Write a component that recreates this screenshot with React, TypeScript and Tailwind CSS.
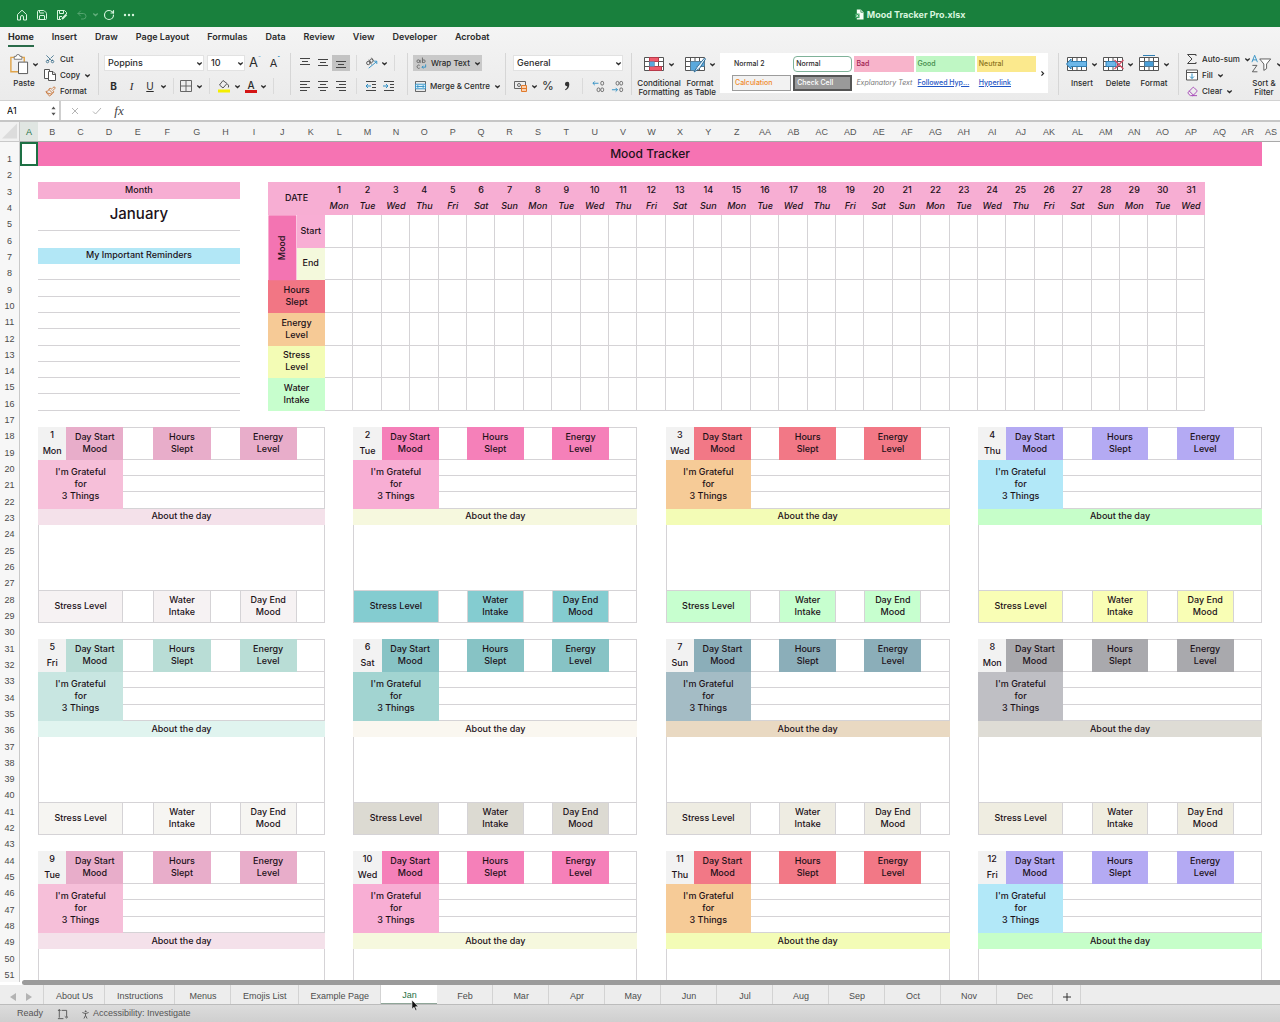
import type { CSSProperties, ReactNode } from "react"
import clsx from "clsx"
import { Save, RotateCw, Undo2, Scissors, Paintbrush, Eraser, PersonStanding } from "lucide-react"

type Cell = {
  row: number
  col: number
  rows?: number
  cols?: number
  text?: string
  className?: string
}

type Palette = { head: string; grateful: string; about: string; foot: string }

const WEEKDAYS = ["Mon", "Tue", "Wed", "Thu", "Fri", "Sat", "Sun"]
const TRACKER_DAYS = Array.from({ length: 31 }, (_, i) => i + 1)
const ROW_COUNT = 51
const COL_COUNT = 45

const RIBBON_TABS = ["Home", "Insert", "Draw", "Page Layout", "Formulas", "Data", "Review", "View", "Developer", "Acrobat"]
const SHEETS = [
  "About Us", "Instructions", "Menus", "Emojis List", "Example Page",
  "Jan", "Feb", "Mar", "Apr", "May", "Jun", "Jul", "Aug", "Sep", "Oct", "Nov", "Dec",
]

const PALETTES: Palette[] = [
  { head: "bg-[#e8adca]", grateful: "bg-[#f6bfd9]", about: "bg-[#f4e1ea]", foot: "bg-[#f6f2f3]" },
  { head: "bg-[#f580b9]", grateful: "bg-[#f8aed4]", about: "bg-[#f6f8de]", foot: "bg-[#84ccd0]" },
  { head: "bg-[#f27886]", grateful: "bg-[#f6cb97]", about: "bg-[#f3fcb6]", foot: "bg-[#c7ffcf]" },
  { head: "bg-[#b4aaf3]", grateful: "bg-[#b2e8f8]", about: "bg-[#c6fec9]", foot: "bg-[#f9feb5]" },
  { head: "bg-[#b9ddd6]", grateful: "bg-[#c8e6e1]", about: "bg-[#e0f4ef]", foot: "bg-[#f6f5f2]" },
  { head: "bg-[#87c3c5]", grateful: "bg-[#a2d4d1]", about: "bg-[#faf7f0]", foot: "bg-[#dcdad2]" },
  { head: "bg-[#8baeb9]", grateful: "bg-[#a4bcc5]", about: "bg-[#e9d9c2]", foot: "bg-[#eeece2]" },
  { head: "bg-[#a9a9ad]", grateful: "bg-[#bfbfc4]", about: "bg-[#dedcd5]", foot: "bg-[#efede1]" },
]

const LINE = "border-[#d5d3d6]"

const columnName = (n: number) => {
  const first = n > 26 ? "A" : ""
  return first + String.fromCharCode(65 + ((n - 1) % 26))
}

const weekday = (day: number) => WEEKDAYS[(day - 1) % 7]

const trackerCells = (): Cell[] => {
  const cells: Cell[] = [
    { row: 1, col: 2, cols: 43, text: "Mood Tracker", className: "bg-[#f673b3] text-[12px]" },
    { row: 3, col: 2, cols: 7, text: "Month", className: "bg-[#f7aed3]" },
    { row: 4, col: 2, cols: 7, rows: 2, text: "January", className: clsx("text-[15px] border-b", LINE) },
    { row: 7, col: 2, cols: 7, text: "My Important Reminders", className: "bg-[#b2e7f6]" },
    { row: 3, col: 10, cols: 2, rows: 2, text: "DATE", className: "bg-[#f7aed3]" },
    { row: 5, col: 10, rows: 4, text: "Mood", className: "bg-[#f374b2] [writing-mode:vertical-rl] rotate-180" },
    { row: 5, col: 11, rows: 2, text: "Start", className: "bg-[#f8aed4]" },
    { row: 7, col: 11, rows: 2, text: "End", className: "bg-[#f4f9dc]" },
    { row: 9, col: 10, cols: 2, rows: 2, text: "Hours\nSlept", className: "bg-[#f27684]" },
    { row: 11, col: 10, cols: 2, rows: 2, text: "Energy\nLevel", className: "bg-[#f6ca96]" },
    { row: 13, col: 10, cols: 2, rows: 2, text: "Stress\nLevel", className: "bg-[#f3fcb5]" },
    { row: 15, col: 10, cols: 2, rows: 2, text: "Water\nIntake", className: "bg-[#c7fecd]" },
  ]
  for (let row = 8; row <= 16; row++) {
    cells.push({ row, col: 2, cols: 7, className: clsx("border-b", LINE) })
  }
  for (const day of TRACKER_DAYS) {
    const col = 11 + day
    cells.push({ row: 3, col, text: String(day), className: "bg-[#f7aed3]" })
    cells.push({ row: 4, col, text: weekday(day), className: "bg-[#f7aed3] italic" })
    for (let row = 5; row <= 15; row += 2) {
      cells.push({ row, col, rows: 2, className: clsx("border-r border-b", LINE) })
    }
  }
  return cells
}

const dayCells = (day: number): Cell[] => {
  const index = day - 1
  const top = 18 + Math.floor(index / 4) * 13
  const left = 2 + (index % 4) * 11
  const { head, grateful, about, foot } = PALETTES[index % 8]

  const cells: Cell[] = [
    { row: 0, col: 0, text: String(day), className: "bg-[#f2f2f2]" },
    { row: 1, col: 0, text: weekday(day), className: "bg-[#f2f2f2]" },
    { row: 0, col: 1, cols: 2, rows: 2, text: "Day Start\nMood", className: head },
    { row: 0, col: 3, rows: 2, className: clsx("border-y", LINE) },
    { row: 0, col: 4, cols: 2, rows: 2, text: "Hours\nSlept", className: head },
    { row: 0, col: 6, rows: 2, className: clsx("border-y", LINE) },
    { row: 0, col: 7, cols: 2, rows: 2, text: "Energy\nLevel", className: head },
    { row: 0, col: 9, rows: 2, className: clsx("border-y border-r", LINE) },
    { row: 2, col: 0, cols: 3, rows: 3, text: "I'm Grateful\nfor\n3 Things", className: grateful },
    { row: 2, col: 3, cols: 7, className: clsx("border-b border-r", LINE) },
    { row: 3, col: 3, cols: 7, className: clsx("border-b border-r", LINE) },
    { row: 4, col: 3, cols: 7, className: clsx("border-b border-r", LINE) },
    { row: 5, col: 0, cols: 10, text: "About the day", className: about },
    { row: 6, col: 0, cols: 10, rows: 4, className: clsx("border-x", LINE) },
    { row: 10, col: 0, cols: 3, rows: 2, text: "Stress Level", className: clsx("border", LINE, foot) },
    { row: 10, col: 3, rows: 2, className: clsx("border-y", LINE) },
    { row: 10, col: 4, cols: 2, rows: 2, text: "Water\nIntake", className: clsx("border", LINE, foot) },
    { row: 10, col: 6, rows: 2, className: clsx("border-y", LINE) },
    { row: 10, col: 7, cols: 2, rows: 2, text: "Day End\nMood", className: clsx("border", LINE, foot) },
    { row: 10, col: 9, rows: 2, className: clsx("border-y border-r", LINE) },
  ]
  return cells
    .map((cell) => ({ ...cell, row: cell.row + top, col: cell.col + left }))
    .filter((cell) => cell.row <= ROW_COUNT)
    .map((cell) => ({ ...cell, rows: Math.min(cell.rows ?? 1, ROW_COUNT + 1 - cell.row) }))
}

const CELLS: Cell[] = [...trackerCells(), ...Array.from({ length: 12 }, (_, i) => dayCells(i + 1)).flat()]

// header column and header row take the first grid track each
const place = (row: number, col: number, rows = 1, cols = 1): CSSProperties => ({
  gridArea: `${row + 1} / ${col + 1} / span ${rows} / span ${cols}`,
})

const Chevron = ({ className }: { className?: string }) => (
  <svg viewBox="0 0 8 8" className={clsx("size-[7px] shrink-0", className)} fill="none" stroke="currentColor" strokeWidth="1.4">
    <path d="M1.5 2.8 4 5.2 6.5 2.8" />
  </svg>
)

const GroupLine = () => <div className="mx-[5px] mt-0.5 h-[42px] w-px shrink-0 bg-[#d6d6d6]" />
const Divider = () => <div className="mx-[6px] h-4 w-px shrink-0 bg-[#dadada]" />

const Tool = ({ label, className, children }: { label: string; className?: string; children: ReactNode }) => (
  <button aria-label={label} className={clsx("flex h-4 shrink-0 items-center justify-center", className)}>
    {children}
  </button>
)

const BigTool = ({ label, icon, className }: { label: string; icon: ReactNode; className?: string }) => (
  <button className={clsx("flex shrink-0 flex-col items-center gap-[6px] pt-1", className)}>
    <span className="flex h-[18px] items-center gap-[3px]">
      {icon}
      <Chevron />
    </span>
    <span className="text-center leading-[9px] whitespace-pre">{label}</span>
  </button>
)

const SmallTool = ({ label, icon, menu }: { label: string; icon: ReactNode; menu?: boolean }) => (
  <button className="flex h-4 items-center gap-1">
    <span className="flex w-3 justify-center">{icon}</span>
    {label}
    {menu && <Chevron />}
  </button>
)

const Picker = ({ label, value, className }: { label: string; value: string; className?: string }) => (
  <div className={clsx("relative h-4 shrink-0", className)}>
    <select aria-label={label} className="h-4 w-full appearance-none border border-[#e2e2e2] bg-white px-[3px] text-[9px] leading-[14px]">
      <option>{value}</option>
    </select>
    <Chevron className="pointer-events-none absolute top-[5px] right-px" />
  </div>
)

const Lines = ({ d }: { d: string }) => (
  <svg viewBox="0 0 12 12" className="size-3" stroke="#444" strokeWidth="1" fill="none">
    <path d={d} />
  </svg>
)

const IndentIcon = ({ flip }: { flip?: boolean }) => (
  <svg viewBox="0 0 12 12" className="size-3" strokeWidth="1" fill="none">
    <path d="M1 1.5h10M7 4.5h4M7 7.5h4M1 10.5h10" stroke="#444" />
    <path d={flip ? "M0 6h5M3 4l2 2-2 2" : "M6 6H1M3 4 1 6l2 2"} stroke="#2f8fc4" />
  </svg>
)

const DecimalIcon = ({ grow }: { grow?: boolean }) => (
  <svg viewBox="0 0 14 14" className="size-[13px]" fill="none" stroke="#666" strokeWidth="1">
    <rect x="9.5" y="1.5" width="3" height="4" rx="1.5" />
    <rect x={grow ? 5.5 : 9.5} y={grow ? 1.5 : 8.5} width="3" height="4" rx="1.5" />
    <rect x={grow ? 9.5 : 5.5} y="8.5" width="3" height="4" rx="1.5" />
    <path d={grow ? "M1 10.5h6M5 8.5l2 2-2 2" : "M7 3.5H1M3 1.5l-2 2 2 2"} stroke="#2f8fc4" />
  </svg>
)

const GridIcon = ({ children }: { children?: ReactNode }) => (
  <svg viewBox="0 0 22 18" className="h-[18px] w-[22px]" fill="none" strokeWidth="1">
    <path d="M1.5 2.5h19v13h-19zM1.5 6.5h19M1.5 11.5h19M6.5 2.5v13M11 2.5v13M15.5 2.5v13" stroke="#555" fill="#fff" />
    {children}
  </svg>
)

const TitleBar = () => (
  <header className="flex h-[27px] shrink-0 items-center bg-[#19803d] text-[#d8f5df]">
    <nav className="flex flex-[8] items-center gap-2 pt-0.5 pl-4">
      <Tool label="Home" className="w-3">
        <svg viewBox="0 0 12 12" className="size-3" fill="none" stroke="currentColor">
          <path d="M1.5 5.5 6 1.2l4.500 4.300v5.500H7.500V8a1.500 1.500 0 0 0-3 0v3h-3z" />
        </svg>
      </Tool>
      <Tool label="Save" className="w-3"><Save size={12} strokeWidth={2} /></Tool>
      <Tool label="Save as" className="w-3">
        <svg viewBox="0 0 12 12" className="size-3" fill="none" stroke="currentColor">
          <path d="M5 10.500H1.500v-9h7l2 2V5M3.500 1.500v3h4v-3M3.500 10.500v-3H6" />
          <path d="m6 10 4.500-4.500" strokeWidth="2" />
        </svg>
      </Tool>
      <Tool label="Undo" className="w-3 opacity-30"><Undo2 size={12} /></Tool>
      <Chevron className="-mx-1 opacity-40" />
      <Tool label="Redo" className="w-3"><RotateCw size={12} strokeWidth={2.300} /></Tool>
      <Tool label="More" className="w-3">
        <svg viewBox="0 0 12 4" className="h-1 w-3" fill="currentColor">
          <circle cx="2" cy="2" r="1.200" /><circle cx="6" cy="2" r="1.200" /><circle cx="10" cy="2" r="1.200" />
        </svg>
      </Tool>
    </nav>
    <h1 className="flex shrink-0 items-center gap-[3px] pt-0.5 text-[9px] font-bold">
      <svg viewBox="0 0 10 12" className="h-[11px] w-[9px]">
        <path d="M2 .5h4.500L9.500 3.500v8H2z" fill="#f4fff6" />
        <path d="M6.500.5v3h3" fill="none" stroke="#19803d" strokeWidth=".8" />
        <path d="M0 5h5v5H0z" fill="#2c9c56" />
        <path d="m1.300 6 2.400 3M3.700 6 1.300 9" stroke="#fff" strokeWidth=".8" />
      </svg>
      Mood Tracker Pro.xlsx
    </h1>
    <div className="flex-[3]" />
  </header>
)

const StyleGallery = () => (
  <div className="ml-px flex w-[328px] shrink-0 items-center bg-white pl-3 text-[7px] leading-[14px]">
    <div className="grid flex-1 grid-cols-5 gap-x-0.5 gap-y-[3px] whitespace-nowrap [&>button]:h-4 [&>button]:min-w-0 [&>button]:px-0.5 [&>button]:text-left">
      <button>Normal 2</button>
      <button className="rounded-sm border border-[#7fb299]">Normal</button>
      <button className="bg-[#f8b4cb] text-[#a0204e]">Bad</button>
      <button className="bg-[#bff7c4] text-[#3f8a4a]">Good</button>
      <button className="bg-[#fbe98d] text-[#8c7420]">Neutral</button>
      <button className="border border-[#9c9c9c] bg-[#f2f2f2] font-medium text-[#f08a2c]">Calculation</button>
      <button className="border-2 border-double border-[#555] bg-[#9a9a9a] leading-3 font-medium text-white">Check Cell</button>
      <button className="font-normal text-[#777] italic">Explanatory Text</button>
      <button className="text-[#1f55c4] underline">Followed Hyp...</button>
      <button className="text-[#1f55c4] underline">Hyperlink</button>
    </div>
    <button aria-label="More styles" className="flex w-3 justify-center"><Chevron className="-rotate-90" /></button>
  </div>
)

const Ribbon = () => (
  <section className="shrink-0 overflow-hidden border-b border-[#d2d2d2] bg-linear-to-b from-[#f4f4f4] to-[#ebebeb] text-[#2b2b2b]">
    <nav className="flex h-[23px] items-start gap-[18px] pt-0.5 pl-2 text-[9px] leading-4 font-semibold">
      {RIBBON_TABS.map((tab) => (
        <button key={tab} className={clsx("h-[18px] border-b-2", tab === "Home" ? "border-[#2a6b4a] font-bold" : "border-transparent")}>
          {tab}
        </button>
      ))}
    </nav>
    <div className="flex h-[50px] pt-px pl-2 text-[8px] font-medium">
      <div className="flex w-[85px] shrink-0 gap-1">
        <BigTool
          label="Paste"
          className="w-8"
          icon={
            <svg viewBox="0 0 20 22" className="h-[21px] w-5" fill="none">
              <path d="M6 3.500H1.500v15H9" stroke="#e0a44a" strokeWidth="1.500" />
              <path d="M12 3.500h3.500V8" stroke="#e0a44a" strokeWidth="1.500" />
              <path d="M5 5.500v-3h2a2 2 0 0 1 4 0h2v3z" fill="#fff" stroke="#777" />
              <path d="M9.500 8.500h9.500v12H9.500z" fill="#fff" stroke="#555" />
            </svg>
          }
        />
        <div className="w-[49px]">
          <SmallTool label="Cut" icon={<Scissors size={10} className="-rotate-90 text-[#3c6f8a]" />} />
          <SmallTool
            label="Copy"
            menu
            icon={
              <svg viewBox="0 0 12 12" className="size-3" fill="#fff" stroke="#555">
                <path d="M.5.5h5v9h-5z" />
                <path d="M4.500 2.500H9l2.500 2.500v6.500h-7zM8.500 2.500v3h3" />
              </svg>
            }
          />
          <SmallTool label="Format" icon={<Paintbrush size={11} className="text-[#c8763a]" />} />
        </div>
      </div>
      <GroupLine />
      <div className="flex w-[181px] shrink-0 flex-col gap-[7px] pt-1">
        <div className="flex">
          <Picker label="Font" value="Poppins" className="mr-[3px] w-[100px]" />
          <Picker label="Font size" value="10" className="w-[38px]" />
          <Tool label="Increase font size" className="w-5 text-[13px] font-normal">A<span className="-mt-2 text-[7px] text-[#2f8fc4]">ˆ</span></Tool>
          <Tool label="Decrease font size" className="w-5 text-[11px] font-normal">A<span className="-mt-2 text-[7px] text-[#2f8fc4]">ˇ</span></Tool>
        </div>
        <div className="flex items-center text-[10px]">
          <Tool label="Bold" className="w-[19px] font-bold">B</Tool>
          <Tool label="Italic" className="w-[17px] font-['Liberation_Serif',serif] text-[11px] italic">I</Tool>
          <Tool label="Underline" className="w-5 font-normal underline">U</Tool>
          <Chevron />
          <Divider />
          <Tool label="Borders" className="w-3">
            <svg viewBox="0 0 12 12" className="size-3" fill="none" stroke="#666">
              <path d="M.5.5h11v11H.5zM6 .5v11M.5 6h11" />
            </svg>
          </Tool>
          <Chevron className="ml-1" />
          <Divider />
          <Tool label="Fill colour" className="w-4">
            <svg viewBox="0 0 14 14" className="size-[14px]" fill="none" stroke="#555">
              <path d="M6 1.500 2.500 6 6 9l4-4.500zM10.500 5q2 2 .8 3.500" />
              <path d="M1 12h12" stroke="#f4ee00" strokeWidth="3" />
            </svg>
          </Tool>
          <Chevron className="mr-px ml-0.5" />
          <Tool label="Font colour" className="w-[18px]">
            <span className="border-b-[3px] border-[#d41414] px-0.5 leading-[10px]">A</span>
          </Tool>
          <Chevron />
          <Divider />
        </div>
      </div>
      <GroupLine />
      <div className="flex w-[106px] shrink-0 flex-col gap-[7px] pt-1">
        <div className="flex items-center">
          <Tool label="Top align" className="w-[18px]"><Lines d="M1 1.500h10M3 4.500h6M1 7.500h10" /></Tool>
          <Tool label="Middle align" className="w-[18px]"><Lines d="M1 2.500h10M3 5.500h6M1 8.500h10" /></Tool>
          <Tool label="Bottom align" className="w-[18px] bg-[#c3c3c3]"><Lines d="M1 4.500h10M3 7.500h6M1 10.500h10" /></Tool>
          <Divider />
          <Tool label="Orientation" className="w-4">
            <svg viewBox="0 0 14 14" className="size-[13px]" fill="none" stroke="#555">
              <circle cx="3.500" cy="6.500" r="1.800" />
              <circle cx="7" cy="4" r="1.800" />
              <path d="m4 3 3 5M7 .8 9 4" />
              <path d="m4 12 8.500-7M9.500 4.500h3.200v3" stroke="#2f8fc4" />
            </svg>
          </Tool>
          <Chevron className="ml-0.5" />
          <Divider />
        </div>
        <div className="flex items-center">
          <Tool label="Align left" className="w-[18px]"><Lines d="M1 1.500h10M1 4.500h7M1 7.500h10M1 10.500h7" /></Tool>
          <Tool label="Centre" className="w-[18px]"><Lines d="M1 1.500h10M3 4.500h6M1 7.500h10M3 10.500h6" /></Tool>
          <Tool label="Align right" className="w-[18px]"><Lines d="M1 1.500h10M4 4.500h7M1 7.500h10M4 10.500h7" /></Tool>
          <Divider />
          <Tool label="Decrease indent" className="w-4"><IndentIcon /></Tool>
          <Tool label="Increase indent" className="w-5"><IndentIcon flip /></Tool>
        </div>
      </div>
      <GroupLine />
      <div className="flex w-[87px] shrink-0 flex-col items-start gap-[7px] pt-1">
        <button className="flex h-4 items-center gap-1 bg-[#c9c9c9] pr-px pl-[3px]">
          <svg viewBox="0 0 12 14" className="h-[13px] w-[11px]" fill="none" stroke="#666">
            <circle cx="2.500" cy="4.500" r="1.500" />
            <path d="M4.500 3v3.500M7 .5v6" />
            <circle cx="8.500" cy="4.500" r="1.500" />
            <path d="M4 9a1.800 1.800 0 1 0 0 3" />
            <path d="M10.500 8v3H6.500M8 9.500 6.500 11 8 12.500" stroke="#2f8fc4" />
          </svg>
          Wrap Text
          <Chevron />
        </button>
        <button className="flex h-4 items-center gap-1 pl-0.5 whitespace-nowrap">
          <svg viewBox="0 0 12 12" className="size-[11px]" fill="none" stroke="#2f8fc4">
            <path d="M.5.5h11v11H.5z" stroke="#555" />
            <path d="M.5 3.500h11v5H.5z" fill="#dff1fb" />
            <path d="M2 6h8M3.500 4.500 2 6l1.500 1.500M8.500 4.500 10 6 8.500 7.500" />
          </svg>
          Merge &amp; Centre
          <Chevron />
        </button>
      </div>
      <GroupLine />
      <div className="flex w-[115px] shrink-0 flex-col gap-[7px] pt-1">
        <Picker label="Number format" value="General" className="ml-0.5 w-[110px]" />
        <div className="flex items-center">
          <Tool label="Currency" className="w-5">
            <svg viewBox="0 0 14 12" className="h-3 w-[14px]" fill="none" stroke="#666">
              <path d="M.5 1.500h11v7H.5z" />
              <circle cx="5" cy="5" r="1.500" />
              <path d="M7.500 5.500h5v6h-5zM7.500 8.500h5" fill="#fbd0ae" stroke="#e07a2c" />
            </svg>
          </Tool>
          <Chevron />
          <Tool label="Percent" className="w-5 text-[12px] font-normal">%</Tool>
          <Tool label="Comma style" className="w-[18px]">
            <svg viewBox="0 0 8 10" className="h-[10px] w-2" fill="#333">
              <path d="M4 .8a2.200 2.200 0 0 1 2.300 2.400C6.300 6 5 8.200 2.500 9.300L2 8.500C3.500 7.600 4.200 6.500 4.300 5.200A2.200 2.200 0 0 1 4 .8z" />
            </svg>
          </Tool>
          <Divider />
          <Tool label="Increase decimal" className="w-[18px]"><DecimalIcon /></Tool>
          <Tool label="Decrease decimal" className="w-5"><DecimalIcon grow /></Tool>
        </div>
      </div>
      <GroupLine />
      <div className="flex w-[416px] shrink-0">
        <BigTool
          label={"Conditional\nFormatting"}
          className="w-11"
          icon={
            <GridIcon>
              <path d="M6.500 2.500h9v4h-9zM6.500 11.500h12v4h-12z" fill="#ef5b6c" stroke="#b83a4a" />
              <path d="M6.500 6.500h5v5h-5z" fill="#5aa9dd" />
            </GridIcon>
          }
        />
        <BigTool
          label={"Format\nas Table"}
          className="w-[38px]"
          icon={
            <GridIcon>
              <path d="M6.500 6.500h14v5h-14zM6.500 11.500h6v4h-6z" fill="#5aa9dd" />
              <path d="m20.500 3-7 8.500-3.500 5.500 5.500-3.500L21.500 4z" fill="#eaf5fc" stroke="#2f6f9c" />
            </GridIcon>
          }
        />
        <div className="flex h-[42px] pt-0.5"><StyleGallery /></div>
      </div>
      <GroupLine />
      <div className="flex w-[109px] shrink-0">
        <BigTool
          label="Insert"
          className="w-9"
          icon={<GridIcon><path d="M5 6.500h15.500v5H5V14L.5 9 5 4z" fill="#6db7e8" stroke="#2f7fb4" /></GridIcon>}
        />
        <BigTool
          label="Delete"
          className="w-9"
          icon={
            <GridIcon>
              <path d="M4 6.500h10v5H4z" fill="#6db7e8" stroke="#2f7fb4" />
              <path d="m12.500 5 9 9M21.500 5l-9 9" stroke="#d8506a" strokeWidth="1.300" />
            </GridIcon>
          }
        />
        <BigTool
          label="Format"
          className="w-9"
          icon={
            <GridIcon>
              <path d="M6.500 6.500h9v5h-9z" fill="#4a9fd8" />
              <path d="M5 .5h12" stroke="#2f7fb4" />
            </GridIcon>
          }
        />
      </div>
      <GroupLine />
      <div className="flex shrink-0 whitespace-nowrap">
        <div className="w-[66px] pl-0.5">
          <SmallTool label="Auto-sum" menu icon={<Lines d="M10 3V1.500H1.500L6 6l-4.500 4.500H10V9" />} />
          <SmallTool
            label="Fill"
            menu
            icon={
              <svg viewBox="0 0 12 12" className="size-3" fill="#fff" stroke="#555">
                <path d="M.5 1h11v10H.5zM.5 3.500h11" />
                <path d="M6 4.500v5M4 7.500l2 2 2-2" stroke="#2f8fc4" fill="none" />
              </svg>
            }
          />
          <SmallTool label="Clear" menu icon={<Eraser size={11} className="text-[#a23fb5]" />} />
        </div>
        <BigTool
          label={"Sort &\nFilter"}
          className="w-7"
          icon={
            <svg viewBox="0 0 24 20" className="ml-[6px] h-5 w-[22px] shrink-0" fill="none">
              <path d="m1 8 3-7.500L7 8M2 5.500h4" stroke="#2f8fc4" />
              <path d="M1.500 11.500H6.500L1.500 18.500H7" stroke="#555" />
              <path d="M9.500 4.500h12l-4.500 5.500v5l-3 2v-7z" fill="#fff" stroke="#555" />
            </svg>
          }
        />
      </div>
    </div>
  </section>
)

const FormulaBar = () => (
  <section className="flex h-[21px] shrink-0 items-center border-b-2 border-[#c6c6c6] bg-white">
    <div className="flex h-full w-[61px] items-center justify-between border-r-2 border-[#cfcfcf] pr-[3px] pl-[7px]">
      <input aria-label="Name box" defaultValue="A1" className="w-8 text-[9px] outline-none" />
      <svg viewBox="0 0 6 12" className="h-3 w-[5px]" fill="#555">
        <path d="M3 .5 5.500 4h-5zM3 11.500.5 8h5z" />
      </svg>
    </div>
    <Tool label="Cancel" className="w-7">
      <svg viewBox="0 0 8 8" className="size-2" stroke="#b5b5b5"><path d="m1 1 6 6M7 1 1 7" /></svg>
    </Tool>
    <Tool label="Enter" className="w-4">
      <svg viewBox="0 0 10 8" className="h-2 w-[10px]" stroke="#b5b5b5" fill="none"><path d="m1 4.500 2.500 2.500L9 1" /></svg>
    </Tool>
    <label htmlFor="formula" className="w-7 text-center font-['Liberation_Serif',serif] text-[13px] leading-4 text-[#444] italic">fx</label>
    <input id="formula" className="h-full min-w-0 flex-1 text-[9px] outline-none" />
  </section>
)

const Sheet = () => (
  <main className="relative min-h-0 flex-1 overflow-hidden bg-white pb-[3px]">
    <table className="grid h-full w-full grid-cols-[20px_18px_repeat(3,minmax(0,57fr))_repeat(3,minmax(0,59fr))_repeat(37,minmax(0,57fr))_18px] grid-rows-[20px_24px_repeat(50,minmax(0,1fr))] text-[9px] leading-3 font-medium text-[#1c1118]">
      <thead className="contents">
        <tr className="contents font-['Liberation_Sans',sans-serif] text-[9px] text-[#555]">
          <th aria-label="Select all" style={place(0, 0)} className="flex items-end justify-end border-r border-b border-[#c9c9c9] bg-[#f1f1f1] p-0.5">
            <svg viewBox="0 0 16 16" className="size-4" fill="#dcdcdc"><path d="M16 0v16H0z" /></svg>
          </th>
          {Array.from({ length: COL_COUNT }, (_, i) => i + 1).map((n) => (
            <th
              key={n}
              scope="col"
              style={place(0, n)}
              className={clsx(
                "flex items-center justify-center border-b border-[#a9a9a9] font-normal",
                n === 1 ? "bg-[#e0e6e2] text-[#1d7044]" : "bg-[#f4f4f4]"
              )}
            >
              {columnName(n)}
            </th>
          ))}
        </tr>
      </thead>
      <tbody className="contents">
        {Array.from({ length: ROW_COUNT }, (_, i) => i + 1).map((row) => (
          <tr key={row} className="contents">
            <th
              scope="row"
              style={place(row, 0)}
              className="flex items-end justify-center border-r border-[#c9c9c9] bg-[#f7f7f7] pb-px font-['Liberation_Sans',sans-serif] text-[9px] font-normal text-[#4a4a4a]"
            >
              {row}
            </th>
            {row === 1 && <td style={place(1, 1)} className="border-2 border-[#1d7044]" />}
            {CELLS.filter((cell) => cell.row === row).map((cell) => (
              <td
                key={cell.col}
                rowSpan={cell.rows}
                colSpan={cell.cols}
                style={place(cell.row, cell.col, cell.rows, cell.cols)}
                className={clsx("flex items-center justify-center pb-px text-center whitespace-pre", cell.className)}
              >
                {cell.text}
              </td>
            ))}
          </tr>
        ))}
      </tbody>
    </table>
    <div className="absolute right-0 bottom-0 left-[22px] h-[5px] rounded-l-full bg-[#9b9b9b]" />
  </main>
)

const SheetTabs = () => (
  <nav className="flex h-5 shrink-0 items-stretch border-b border-[#bcbcbc] bg-[#ededed] font-['Liberation_Sans',sans-serif] text-[9px] text-[#4d4d4d]">
    <div className="flex w-11 items-center gap-[10px] border-r border-[#d3d3d3] pt-1 pl-[10px]">
      <button aria-label="Previous sheet">
        <svg viewBox="0 0 6 8" className="h-2 w-[6px]" fill="#b3b3b3"><path d="M6 0v8L0 4z" /></svg>
      </button>
      <button aria-label="Next sheet">
        <svg viewBox="0 0 6 8" className="h-2 w-[6px]" fill="#b3b3b3"><path d="M0 0v8l6-4z" /></svg>
      </button>
    </div>
    {SHEETS.map((name) => (
      <button
        key={name}
        className={clsx(
          "min-w-14 shrink-0 pt-1 pr-[11px] pl-3",
          name === "Jan" ? "border-b border-[#8fa598] bg-white text-[#1d7044]" : "border-r border-[#d3d3d3]"
        )}
      >
        {name}
      </button>
    ))}
    <button aria-label="Add sheet" className="flex w-7 items-center justify-center border-r border-[#d3d3d3] pt-1">
      <svg viewBox="0 0 8 8" className="size-2" stroke="#333"><path d="M4 0v8M0 4h8" /></svg>
    </button>
  </nav>
)

const StatusBar = () => (
  <footer className="flex h-[17px] shrink-0 items-center bg-linear-to-b from-[#dcdcdc] to-[#cfcfcf] pt-px pl-[17px] font-['Liberation_Sans',sans-serif] text-[9px] text-[#555]">
    <span>Ready</span>
    <svg viewBox="0 0 12 12" className="mr-3 ml-[14px] size-[11px]" fill="none" stroke="#555">
      <path d="M1 1.500h3M2.500 0v9.500M1 10.500h6M5 1.500h5.500V9M8.500 8l2 2 1.500-2" />
    </svg>
    <button className="flex items-center gap-0.5">
      <PersonStanding size={11} />
      Accessibility: Investigate
    </button>
  </footer>
)

const Pointer = () => (
  <svg viewBox="0 0 10 14" className="pointer-events-none absolute bottom-[10px] left-[411px] h-[13px] w-[9px]">
    <path d="M1 .8v10.400l2.400-2.200 1.700 3.900 1.600-.7-1.700-3.800h3.300z" fill="#111" stroke="#fff" strokeWidth=".7" />
  </svg>
)

export default function App() {
  return (
    <div className="relative flex h-screen flex-col overflow-hidden font-['Inter',sans-serif]">
      <TitleBar />
      <Ribbon />
      <FormulaBar />
      <Sheet />
      <SheetTabs />
      <StatusBar />
      <Pointer />
    </div>
  )
}
